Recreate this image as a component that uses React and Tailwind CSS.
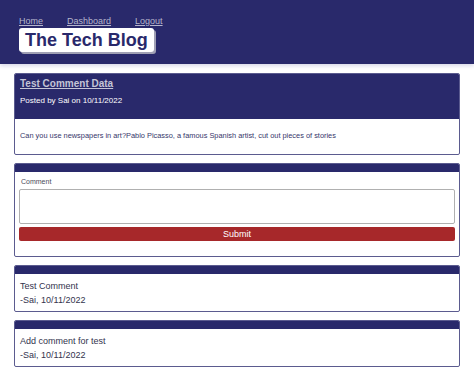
// App.jsx
import React from 'react';

const comments = [
  { id: 1, text: 'Test Comment', author: 'Sai', date: '10/11/2022' },
  { id: 2, text: 'Add comment for test', author: 'Sai', date: '10/11/2022' },
];

const App = () => {
  return (
    <div className="min-h-screen bg-white font-['Liberation_Sans',Arial,sans-serif]">
      {/* Cabecera */}
      <header className="h-16 bg-[#29296b] px-[19px] pt-[14px] shadow-[0_2px_4px_rgba(60,60,150,0.2)]">
        <nav className="flex gap-[24px] text-[9px] leading-[14px] text-[#b6b6cc]">
          <a href="#" className="underline">Home</a>
          <a href="#" className="underline">Dashboard</a>
          <a href="#" className="underline">Logout</a>
        </nav>
        <h1 className="inline-block h-6 rounded-[3px] bg-white px-[6px] text-[18px] font-bold leading-6 text-[#29296b] shadow-[2px_2px_0_#a0a0b4]">
          The Tech Blog
        </h1>
      </header>

      <main className="flex flex-col gap-2 px-[14px] pt-[9px]">
        {/* Post */}
        <div className="overflow-hidden rounded-[2px] border border-[#5b5b8f]">
          <div className="h-[45px] bg-[#29296b] px-[5px] pt-[3px]">
            <h2 className="text-[10px] font-bold leading-[14px] text-[#c4c4d6] underline">Test Comment Data</h2>
            <p className="mt-[4px] text-[8px] leading-[12px] text-white">Posted by Sai on 10/11/2022</p>
          </div>
          <div className="px-[5px] pb-[12px] pt-[11px] text-[7.4px] leading-[12px] text-[#36366a]">
            Can you use newspapers in art?Pablo Picasso, a famous Spanish artist, cut out pieces of stories
          </div>
        </div>

        {/* Formulario de comentario */}
        <div className="overflow-hidden rounded-[2px] border border-[#5b5b8f]">
          <div className="h-[8px] bg-[#29296b]"></div>
          <form className="flex flex-col px-1 pb-[15px] pt-[5px]" onSubmit={(e) => e.preventDefault()}>
            <label className="pl-[2px] text-[7px] leading-[10px] text-[#4a4a5a]">Comment</label>
            <textarea className="mt-[2px] h-[35px] w-full resize-none rounded-[2px] border border-[#b0b0b0] bg-white"></textarea>
            <button type="submit" className="mt-[3px] h-[14px] w-full rounded-[2px] bg-[#a7282a] text-[9px] leading-[14px] text-white">
              Submit
            </button>
          </form>
        </div>

        {/* Comentarios */}
        {comments.map((c) => (
          <div key={c.id} className="overflow-hidden rounded-[2px] border border-[#5b5b8f]">
            <div className="h-[8px] bg-[#29296b]"></div>
            <div className="px-[5px] pb-[4px] pt-[5px] text-[9px] leading-[14px] text-[#33334d]">
              <p>{c.text}</p>
              <p>-{c.author}, {c.date}</p>
            </div>
          </div>
        ))}
      </main>
    </div>
  );
};

export default App;
